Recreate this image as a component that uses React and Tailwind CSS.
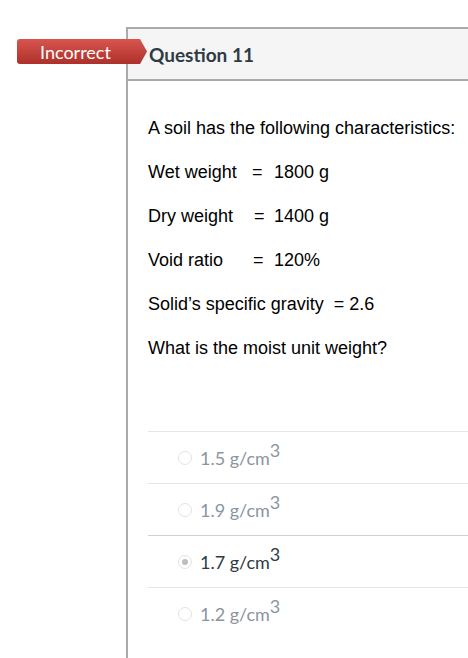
import React from 'react';

const answers = [
  { value: '1.5', selected: false },
  { value: '1.9', selected: false },
  { value: '1.7', selected: true },
  { value: '1.2', selected: false },
];

function Radio({ checked }) {
  return (
    <span className="flex h-[14px] w-[14px] shrink-0 items-center justify-center rounded-full border border-[#e3e3e3] bg-white">
      {checked && <span className="h-[6px] w-[6px] rounded-full bg-[#bdbdbd]" />}
    </span>
  );
}

export default function App() {
  return (
    <div className="relative min-h-[658px] overflow-hidden bg-white font-['Liberation_Sans',Arial,sans-serif]">
      {/* Result badge */}
      <div className="absolute left-[17px] top-[39px] flex h-[25px] w-[130px] items-center rounded-l-[3px] bg-gradient-to-b from-[#d9554e] to-[#ad302a] pl-[23px] font-['Lato',sans-serif] text-[18px] leading-none text-white [clip-path:polygon(0_0,123px_0,130px_50%,123px_100%,0_100%)]">
        Incorrect
      </div>

      <div className="ml-[126px] pt-[27px]">
        <div className="min-h-[631px] border-l-2 border-t-2 border-[#aaaaaa]">
          {/* Header */}
          <div className="flex h-[52px] items-center border-b-2 border-[#aaaaaa] bg-[#f5f5f5] pl-[21px] pt-[3px]">
            <h2 className="font-['Lato',sans-serif] text-[19px] font-bold text-[#2d3b45]">Question 11</h2>
          </div>

          {/* Question text */}
          <div className="flex flex-col gap-[24px] pl-[20px] pt-[37px] text-[18px] leading-[20px] text-black">
            <p>A soil has the following characteristics:</p>
            <p>
              <span className="inline-block w-[104px]">Wet weight</span>
              <span className="inline-block w-[22px]">=</span>
              1800 g
            </p>
            <p>
              <span className="inline-block w-[106px]">Dry weight</span>
              <span className="inline-block w-[20px]">=</span>
              1400 g
            </p>
            <p>
              <span className="inline-block w-[105px]">Void ratio</span>
              <span className="inline-block w-[21px]">=</span>
              120%
            </p>
            <p>Solid’s specific gravity&nbsp; = 2.6</p>
            <p>What is the moist unit weight?</p>
          </div>

          {/* Answers */}
          <div className="ml-[20px] mt-[73px] font-['Lato',sans-serif]">
            {answers.map((a, i) => (
              <div
                key={a.value}
                className={`flex h-[52px] items-center gap-[8px] border-t pl-[30px] ${i === 2 ? 'border-[#d0d0d0]' : 'border-[#e6e6e6]'}`}
              >
                <Radio checked={a.selected} />
                <span className={`text-[18px] leading-[20px] ${a.selected ? 'text-[#2d3b45]' : 'text-[#8b95a0]'}`}>
                  {a.value} g/cm
                  <sup className="relative -top-[8px] text-[18px]">3</sup>
                </span>
              </div>
            ))}
          </div>
        </div>
      </div>
    </div>
  );
}
